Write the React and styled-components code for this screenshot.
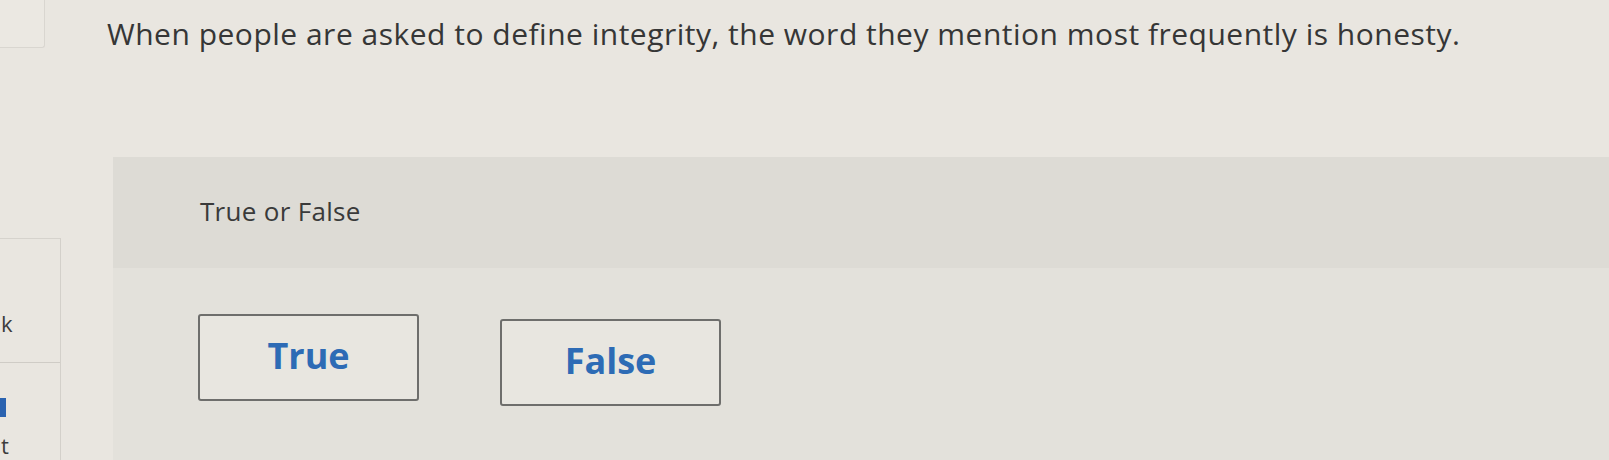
import React from "react";
import styled, { createGlobalStyle } from "styled-components";

const Global = createGlobalStyle`
  html, body { margin: 0; padding: 0; }
  body {
    width: 1609px;
    height: 460px;
    overflow: hidden;
    background: #e9e6e0;
    font-family: "Open Sans", "Lato", sans-serif;
  }
`;

const Page = styled.div`
  display: flex;
  width: 1609px;
  height: 460px;
  background: #e9e6e0;
`;

const Sidebar = styled.aside`
  width: 62px;
  flex: none;
  display: flex;
  flex-direction: column;
  overflow: hidden;
`;

const TopCard = styled.div`
  width: 45px;
  height: 48px;
  flex: none;
  box-sizing: border-box;
  border-right: 1px solid #d9d6d0;
  border-bottom: 1px solid #d9d6d0;
  border-bottom-right-radius: 3px;
  background: #ebe8e2;
`;

const NavPanel = styled.div`
  margin-top: 190px;
  width: 61px;
  box-sizing: border-box;
  flex: none;
  border-top: 1px solid #d6d3cd;
  border-right: 1px solid #d3d0ca;
  display: flex;
  flex-direction: column;
`;

const NavItem = styled.div`
  height: ${(p) => p.$h}px;
  flex: none;
  box-sizing: border-box;
  border-bottom: ${(p) => (p.$divider ? "1px solid #cfccc6" : "none")};
  padding-top: ${(p) => p.$top}px;
  padding-left: 1px;
  font-size: 22px;
  line-height: 22px;
  color: #3c3c3c;
  overflow: hidden;
`;

const BlueMark = styled.span`
  display: block;
  width: 6px;
  height: 19px;
  background: #2b63b0;
  margin: 0 0 17px -1px;
`;

const Main = styled.main`
  flex: 1;
  display: flex;
  flex-direction: column;
`;

const Question = styled.h1`
  margin: 16px 0 0 45px;
  font-size: 30px;
  line-height: 36px;
  font-weight: 400;
  color: #363636;
  letter-spacing: 0.5px;
  white-space: nowrap;
`;

const AnswerPanel = styled.section`
  margin-top: 105px;
  margin-left: 51px;
  flex: 1;
  background: #e3e1db;
  display: flex;
  flex-direction: column;
`;

const PromptBand = styled.div`
  height: 111px;
  flex: none;
  background: #dddbd5;
  display: flex;
  align-items: center;
  padding-left: 87px;
  padding-bottom: 4px;
  box-sizing: border-box;
  font-size: 26px;
  letter-spacing: 0.3px;
  color: #3a3a3a;
`;

const Options = styled.div`
  display: flex;
  align-items: flex-start;
  gap: 81px;
  padding: 46px 0 0 85px;
`;

const Choice = styled.button`
  width: 221px;
  height: 87px;
  margin-top: ${(p) => p.$offset || 0}px;
  border: 2px solid #6e6e6c;
  border-radius: 3px;
  background: #e8e6e0;
  color: #2d6bb5;
  font-family: "Open Sans", "Lato", sans-serif;
  font-weight: 700;
  font-size: 36px;
  cursor: pointer;
  padding: 0 0 4px;
`;

export default function App() {
  return (
    <>
      <Global />
      <Page>
        <Sidebar>
          <TopCard />
          <NavPanel>
            <NavItem $h={124} $divider $top={73}>k</NavItem>
            <NavItem $h={97} $top={35}>
              <BlueMark />
              t
            </NavItem>
          </NavPanel>
        </Sidebar>
        <Main>
          <Question>
            When people are asked to define integrity, the word they mention most frequently is honesty.
          </Question>
          <AnswerPanel>
            <PromptBand>True or False</PromptBand>
            <Options>
              <Choice>True</Choice>
              <Choice $offset={5}>False</Choice>
            </Options>
          </AnswerPanel>
        </Main>
      </Page>
    </>
  );
}
